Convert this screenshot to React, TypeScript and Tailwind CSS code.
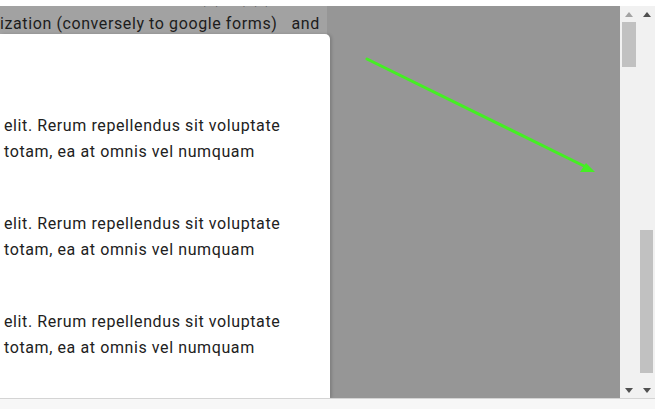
import React from 'react';

const para = ['elit. Rerum repellendus sit voluptate', 'totam, ea at omnis vel numquam'];

function Tri({ up, color }: { up?: boolean; color: string }) {
  return (
    <svg width="8" height="5" viewBox="0 0 8 5" className="block">
      <polygon points={up ? '0,5 8,5 4,0' : '0,0 8,0 4,5'} fill={color} />
    </svg>
  );
}

function Scrollbar({ upColor, thumbTop, thumbHeight, width }: { upColor: string; thumbTop: string; thumbHeight: string; width: string }) {
  return (
    <div className={`${width} h-full bg-[#f1f1f1] flex flex-col items-center`}>
      <div className="h-[16px] flex items-center justify-center pt-[1px]">
        <Tri up color={upColor} />
      </div>
      <div className="flex-1 w-full px-[2px]">
        <div className={`${thumbTop} ${thumbHeight} w-full bg-[#c1c1c1]`} />
      </div>
      <div className="h-[16px] flex items-center justify-center">
        <Tri color="#505050" />
      </div>
    </div>
  );
}

export default function App() {
  return (
    <div className="w-[655px] h-[409px] overflow-hidden bg-white flex flex-col font-['Roboto',sans-serif]">
      <div className="h-[6px] bg-white" />
      <div className="h-[392px] flex">
        <div className="relative w-[620px] h-full bg-[#969696] overflow-hidden">
          {/* dimmed page text behind the dialog */}
          <div className="w-[327px] h-[28px] bg-[#a2a2a2] overflow-hidden text-[16px] leading-[26px] tracking-[0.6px] text-[#1c1c1c] whitespace-nowrap">
            <div className="-mt-[21px] pl-[200px]">(p)  y   (p)  ) </div>
            <div className="flex">
              <span>ization (conversely to google forms)</span>
              <span className="ml-[14px]">and</span>
            </div>
          </div>
          <div className="w-[330px] h-[364px] bg-white rounded-tr-[5px] shadow-[2px_0_3px_rgba(0,0,0,0.15)] pt-[79px] pl-[4px] flex flex-col gap-[46px] text-[16px] leading-[26px] tracking-[0.6px] text-[#212121] whitespace-nowrap">
            {[0, 1, 2].map((i) => (
              <div key={i}>
                {para.map((l) => (
                  <div key={l}>{l}</div>
                ))}
              </div>
            ))}
          </div>
          <svg className="absolute left-0 top-0" width="620" height="392" viewBox="0 0 620 392">
            <line x1="367" y1="53" x2="588" y2="162" stroke="#45ee24" strokeWidth="3" strokeLinecap="round" />
            <polygon points="595,166 580,166 586,157" fill="#45ee24" />
          </svg>
        </div>
        <Scrollbar width="w-[18px]" upColor="#a3a3a3" thumbTop="mt-0" thumbHeight="h-[45px]" />
        <Scrollbar width="w-[17px]" upColor="#505050" thumbTop="mt-[208px]" thumbHeight="h-[143px]" />
      </div>
      <div className="h-[1px] bg-[#d4d4d4]" />
      <div className="flex-1 bg-[#f7f7f7]" />
    </div>
  );
}
